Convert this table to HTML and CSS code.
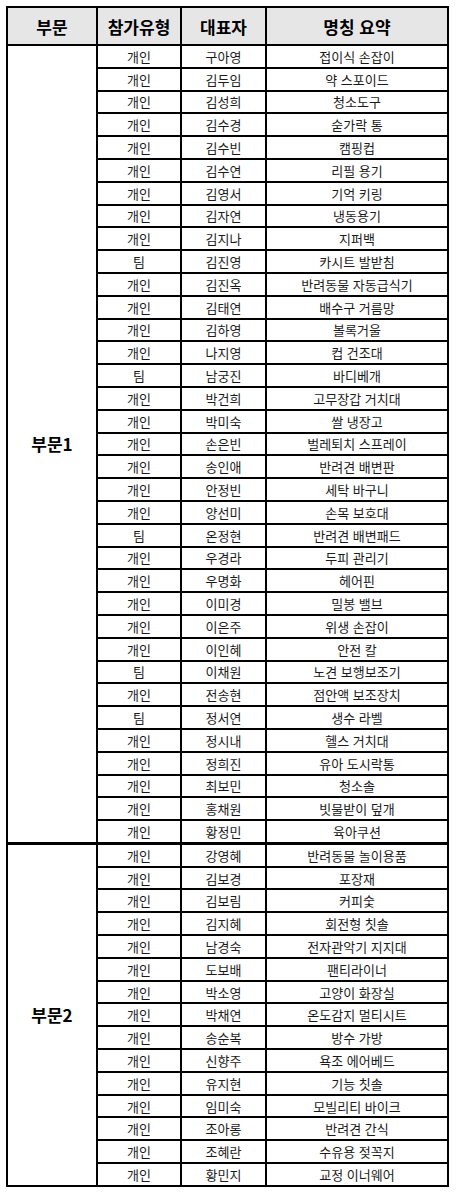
FILE: index.html
```html
<!DOCTYPE html>
<html lang="ko">
<head>
<meta charset="utf-8">
<title>부문별 명단</title>
<link rel="stylesheet" href="styles.css">
</head>
<body>
<div class="sheet">
  <div class="grid head">
    <div class="cell">부문</div>
    <div class="cell">참가유형</div>
    <div class="cell">대표자</div>
    <div class="cell">명칭 요약</div>
  </div>
  <div class="grid section s1">
    <div class="cell group g35">부문1</div>
    <div class="cell">개인</div><div class="cell">구아영</div><div class="cell">접이식 손잡이</div>
    <div class="cell">개인</div><div class="cell">김두임</div><div class="cell">약 스포이드</div>
    <div class="cell">개인</div><div class="cell">김성희</div><div class="cell">청소도구</div>
    <div class="cell">개인</div><div class="cell">김수경</div><div class="cell">숟가락 통</div>
    <div class="cell">개인</div><div class="cell">김수빈</div><div class="cell">캠핑컵</div>
    <div class="cell">개인</div><div class="cell">김수연</div><div class="cell">리필 용기</div>
    <div class="cell">개인</div><div class="cell">김영서</div><div class="cell">기억 키링</div>
    <div class="cell">개인</div><div class="cell">김자연</div><div class="cell">냉동용기</div>
    <div class="cell">개인</div><div class="cell">김지나</div><div class="cell">지퍼백</div>
    <div class="cell">팀</div><div class="cell">김진영</div><div class="cell">카시트 발받침</div>
    <div class="cell">개인</div><div class="cell">김진옥</div><div class="cell">반려동물 자동급식기</div>
    <div class="cell">개인</div><div class="cell">김태연</div><div class="cell">배수구 거름망</div>
    <div class="cell">개인</div><div class="cell">김하영</div><div class="cell">볼록거울</div>
    <div class="cell">개인</div><div class="cell">나지영</div><div class="cell">컵 건조대</div>
    <div class="cell">팀</div><div class="cell">남궁진</div><div class="cell">바디베개</div>
    <div class="cell">개인</div><div class="cell">박건희</div><div class="cell">고무장갑 거치대</div>
    <div class="cell">개인</div><div class="cell">박미숙</div><div class="cell">쌀 냉장고</div>
    <div class="cell">개인</div><div class="cell">손은빈</div><div class="cell">벌레퇴치 스프레이</div>
    <div class="cell">개인</div><div class="cell">송인애</div><div class="cell">반려견 배변판</div>
    <div class="cell">개인</div><div class="cell">안정빈</div><div class="cell">세탁 바구니</div>
    <div class="cell">개인</div><div class="cell">양선미</div><div class="cell">손목 보호대</div>
    <div class="cell">팀</div><div class="cell">온정현</div><div class="cell">반려견 배변패드</div>
    <div class="cell">개인</div><div class="cell">우경라</div><div class="cell">두피 관리기</div>
    <div class="cell">개인</div><div class="cell">우명화</div><div class="cell">헤어핀</div>
    <div class="cell">개인</div><div class="cell">이미경</div><div class="cell">밀봉 밸브</div>
    <div class="cell">개인</div><div class="cell">이은주</div><div class="cell">위생 손잡이</div>
    <div class="cell">개인</div><div class="cell">이인혜</div><div class="cell">안전 칼</div>
    <div class="cell">팀</div><div class="cell">이채원</div><div class="cell">노견 보행보조기</div>
    <div class="cell">개인</div><div class="cell">전송현</div><div class="cell">점안액 보조장치</div>
    <div class="cell">팀</div><div class="cell">정서연</div><div class="cell">생수 라벨</div>
    <div class="cell">개인</div><div class="cell">정시내</div><div class="cell">헬스 거치대</div>
    <div class="cell">개인</div><div class="cell">정희진</div><div class="cell">유아 도시락통</div>
    <div class="cell">개인</div><div class="cell">최보민</div><div class="cell">청소솔</div>
    <div class="cell">개인</div><div class="cell">홍채원</div><div class="cell">빗물받이 덮개</div>
    <div class="cell">개인</div><div class="cell">황정민</div><div class="cell">육아쿠션</div>
  </div>
  <div class="grid section s2">
    <div class="cell group g15">부문2</div>
    <div class="cell">개인</div><div class="cell">강영혜</div><div class="cell">반려동물 놀이용품</div>
    <div class="cell">개인</div><div class="cell">김보경</div><div class="cell">포장재</div>
    <div class="cell">개인</div><div class="cell">김보림</div><div class="cell">커피숯</div>
    <div class="cell">개인</div><div class="cell">김지혜</div><div class="cell">회전형 칫솔</div>
    <div class="cell">개인</div><div class="cell">남경숙</div><div class="cell">전자관악기 지지대</div>
    <div class="cell">개인</div><div class="cell">도보배</div><div class="cell">팬티라이너</div>
    <div class="cell">개인</div><div class="cell">박소영</div><div class="cell">고양이 화장실</div>
    <div class="cell">개인</div><div class="cell">박채연</div><div class="cell">온도감지 멀티시트</div>
    <div class="cell">개인</div><div class="cell">송순복</div><div class="cell">방수 가방</div>
    <div class="cell">개인</div><div class="cell">신향주</div><div class="cell">욕조 에어베드</div>
    <div class="cell">개인</div><div class="cell">유지현</div><div class="cell">기능 칫솔</div>
    <div class="cell">개인</div><div class="cell">임미숙</div><div class="cell">모빌리티 바이크</div>
    <div class="cell">개인</div><div class="cell">조아롱</div><div class="cell">반려견 간식</div>
    <div class="cell">개인</div><div class="cell">조혜란</div><div class="cell">수유용 젖꼭지</div>
    <div class="cell">개인</div><div class="cell">황민지</div><div class="cell">교정 이너웨어</div>
  </div>
</div>
</body>
</html>
```

FILE: styles.css
```css
html, body {
  margin: 0;
  padding: 0;
  background: #ffffff;
}
body {
  padding: 6px;
  font-family: "Noto Sans CJK KR", "Noto Sans", sans-serif;
  color: #1a1a1a;
}
.sheet {
  width: 439px;
  border: 2px solid #000000;
  background: #000000;
  display: flex;
  flex-direction: column;
  gap: 2px;
}
.grid {
  display: grid;
  grid-template-columns: 88px 82px 83px 180px;
  column-gap: 2px;
  row-gap: 2px;
  background: #000000;
}
.cell {
  background: #ffffff;
  display: flex;
  align-items: center;
  justify-content: center;
  font-size: 13px;
  line-height: 1;
  white-space: nowrap;
}
.head {
  grid-template-rows: 36px;
}
.head .cell {
  background: #e7e6e6;
  font-size: 17px;
  font-weight: 700;
  color: #000000;
}
.s1 {
  grid-template-rows: repeat(35, 20.8px);
}
.s2 {
  grid-template-rows: repeat(15, 20.8px);
  margin-top: 1px;
}
.group {
  grid-column: 1;
  font-size: 17px;
  font-weight: 700;
  color: #000000;
}
.g35 { grid-row: 1 / span 35; }
.g15 { grid-row: 1 / span 15; }
```
